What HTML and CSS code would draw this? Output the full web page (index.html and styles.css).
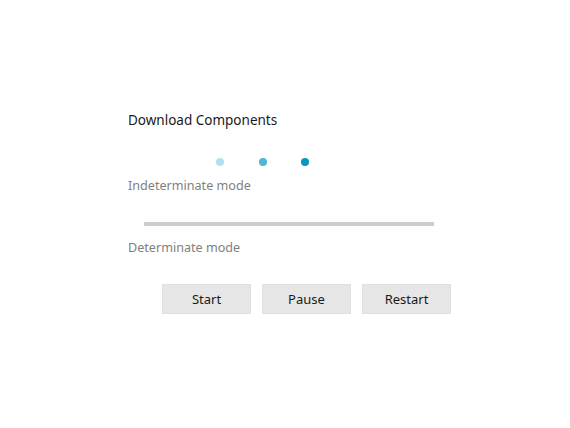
FILE: index.html
```html
<!DOCTYPE html>
<html>
<head>
<meta charset="utf-8">
<link rel="stylesheet" href="styles.css">
</head>
<body>
<div class="panel">
  <div class="title">Download Components</div>
  <div class="dots">
    <span class="dot d1"></span>
    <span class="dot d2"></span>
    <span class="dot d3"></span>
  </div>
  <div class="label">Indeterminate mode</div>
  <div class="bar-row"><div class="bar"></div></div>
  <div class="label label-det">Determinate mode</div>
  <div class="buttons">
    <button class="btn">Start</button>
    <button class="btn">Pause</button>
    <button class="btn">Restart</button>
  </div>
</div>
</body>
</html>
```
FILE: styles.css
```css
html, body {
  margin: 0;
  padding: 0;
  background: #ffffff;
  font-family: "Noto Sans", "Open Sans", sans-serif;
}
.panel {
  padding: 110px 0 0 128px;
  width: 330px;
}
.title {
  font-size: 13.5px;
  line-height: 20px;
  color: #1a1a1a;
}
.dots {
  display: flex;
  gap: 34.5px;
  padding-left: 88px;
  margin-top: 28px;
  height: 8px;
}
.dot {
  width: 8px;
  height: 8px;
  border-radius: 50%;
}
.d1 { background: #b3e0ee; }
.d2 { background: #4bb6d6; }
.d3 { background: #0497bf; }
.label {
  font-size: 12.6px;
  line-height: 18px;
  color: #808080;
  margin-top: 11px;
}
.label-det {
  margin-top: 13px;
}
.bar-row {
  padding: 27px 0 0 16px;
}
.bar {
  width: 290px;
  height: 4px;
  background: #cccccc;
}
.buttons {
  display: flex;
  gap: 11px;
  padding-left: 34px;
  margin-top: 27px;
}
.btn {
  width: 89px;
  height: 30px;
  background: #e6e6e6;
  border: 1px solid #e0e0e0;
  font-family: "Noto Sans", "Open Sans", sans-serif;
  font-size: 13px;
  color: #1a1a1a;
  padding: 0;
}
```
